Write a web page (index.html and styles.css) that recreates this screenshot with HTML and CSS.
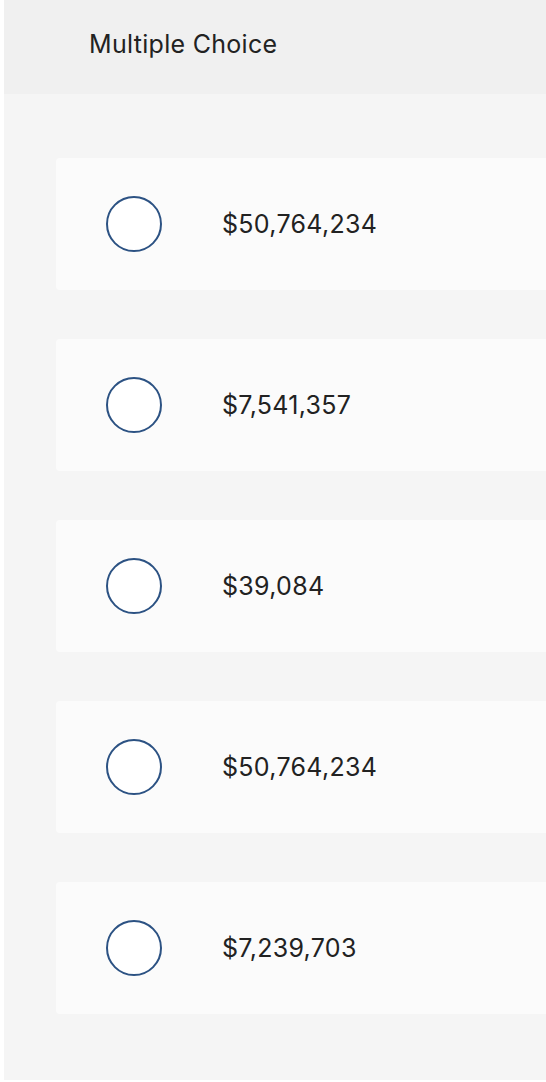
FILE: index.html
```html
<!DOCTYPE html>
<html>
<head>
<meta charset="utf-8">
<link rel="stylesheet" href="styles.css">
</head>
<body>
<div class="page">
  <div class="header"><span class="title">Multiple Choice</span></div>
  <div class="options">
    <div class="option"><span class="radio"></span><span class="label">$50,764,234</span></div>
    <div class="option"><span class="radio"></span><span class="label">$7,541,357</span></div>
    <div class="option"><span class="radio"></span><span class="label">$39,084</span></div>
    <div class="option"><span class="radio"></span><span class="label">$50,764,234</span></div>
    <div class="option"><span class="radio"></span><span class="label">$7,239,703</span></div>
  </div>
</div>
</body>
</html>
```
FILE: styles.css
```css
html, body {
  margin: 0;
  padding: 0;
  background: #ffffff;
}
.page {
  margin-left: 4px;
  width: calc(100% - 4px);
  overflow: hidden;
  font-family: Inter, "Liberation Sans", sans-serif;
  color: #222222;
}
.header {
  height: 94px;
  background: #f0f0f0;
  display: flex;
  align-items: center;
  padding-left: 85px;
  box-sizing: border-box;
  padding-bottom: 6px;
}
.title {
  font-size: 25px;
  letter-spacing: 0.3px;
}
.options {
  background: #f5f5f5;
  padding: 64px 0 66px 52px;
  display: flex;
  flex-direction: column;
  gap: 49px;
}
.option {
  height: 132px;
  width: 600px;
  background: #fbfbfb;
  border-radius: 4px;
  display: flex;
  align-items: center;
  padding-left: 50px;
  box-sizing: border-box;
}
.radio {
  width: 56px;
  height: 56px;
  border: 2px solid #2c5283;
  border-radius: 50%;
  background: #ffffff;
  box-sizing: border-box;
  flex: none;
}
.label {
  margin-left: 60px;
  font-size: 25px;
  letter-spacing: 0.3px;
}
```
